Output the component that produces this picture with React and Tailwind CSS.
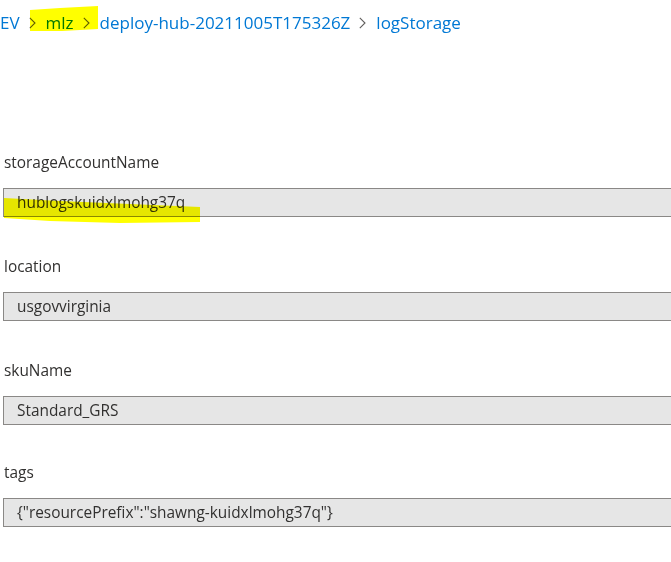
function Chevron() {
  return (
    <svg width="7" height="14" viewBox="0 0 7 14" className="mr-[1px] shrink-0">
      <path d="M0.8 1.8 L6 7 L0.8 12.2" fill="none" stroke="#605e5c" strokeWidth="1.1" />
    </svg>
  )
}

function Field({ label, value, className = "" }) {
  return (
    <div className={"flex flex-col " + className}>
      <div className="h-[22px] pl-[4px] text-[15.4px] leading-[22px] text-[#323130]">{label}</div>
      <div className="mt-[14px] ml-[3px] mr-[-20px] h-[29px] border border-[#8a8886] bg-[#e6e6e6] pl-[13px] text-[15.4px] leading-[27px] text-[#323130]">
        {value}
      </div>
    </div>
  )
}

export default function App() {
  return (
    <div
      className="relative h-[562px] w-[671px] overflow-hidden bg-white"
      style={{ fontFamily: '"Open Sans", "Noto Sans", sans-serif' }}
    >
      {/* BREADCRUMB */}
      <div className="flex h-[46px] items-center gap-[9px] text-[17px] text-[#0078d4]">
        <span>EV</span>
        <Chevron />
        <span>mlz</span>
        <Chevron />
        <span>deploy-hub-20211005T175326Z</span>
        <Chevron />
        <span>logStorage</span>
      </div>

      {/* FIELDS */}
      <div className="mt-[106px] flex flex-col gap-[39px]">
        <Field label="storageAccountName" value="hublogskuidxlmohg37q" />
        <Field label="location" value="usgovvirginia" />
        <Field label="skuName" value="Standard_GRS" />
        <Field label="tags" value={'{"resourcePrefix":"shawng-kuidxlmohg37q"}'} className="-mt-[2px]" />
      </div>

      {/* HIGHLIGHTER MARKS */}
      <svg className="pointer-events-none absolute left-0 top-0 mix-blend-multiply" width="671" height="562">
        <polygon points="30,10 60,8 98,6 98,29 62,31 30,31" fill="#ffff00" />
        <polygon points="4,198 60,201 130,204 200,207 200,222 120,223 50,221 4,218" fill="#ffff00" />
      </svg>
    </div>
  )
}
